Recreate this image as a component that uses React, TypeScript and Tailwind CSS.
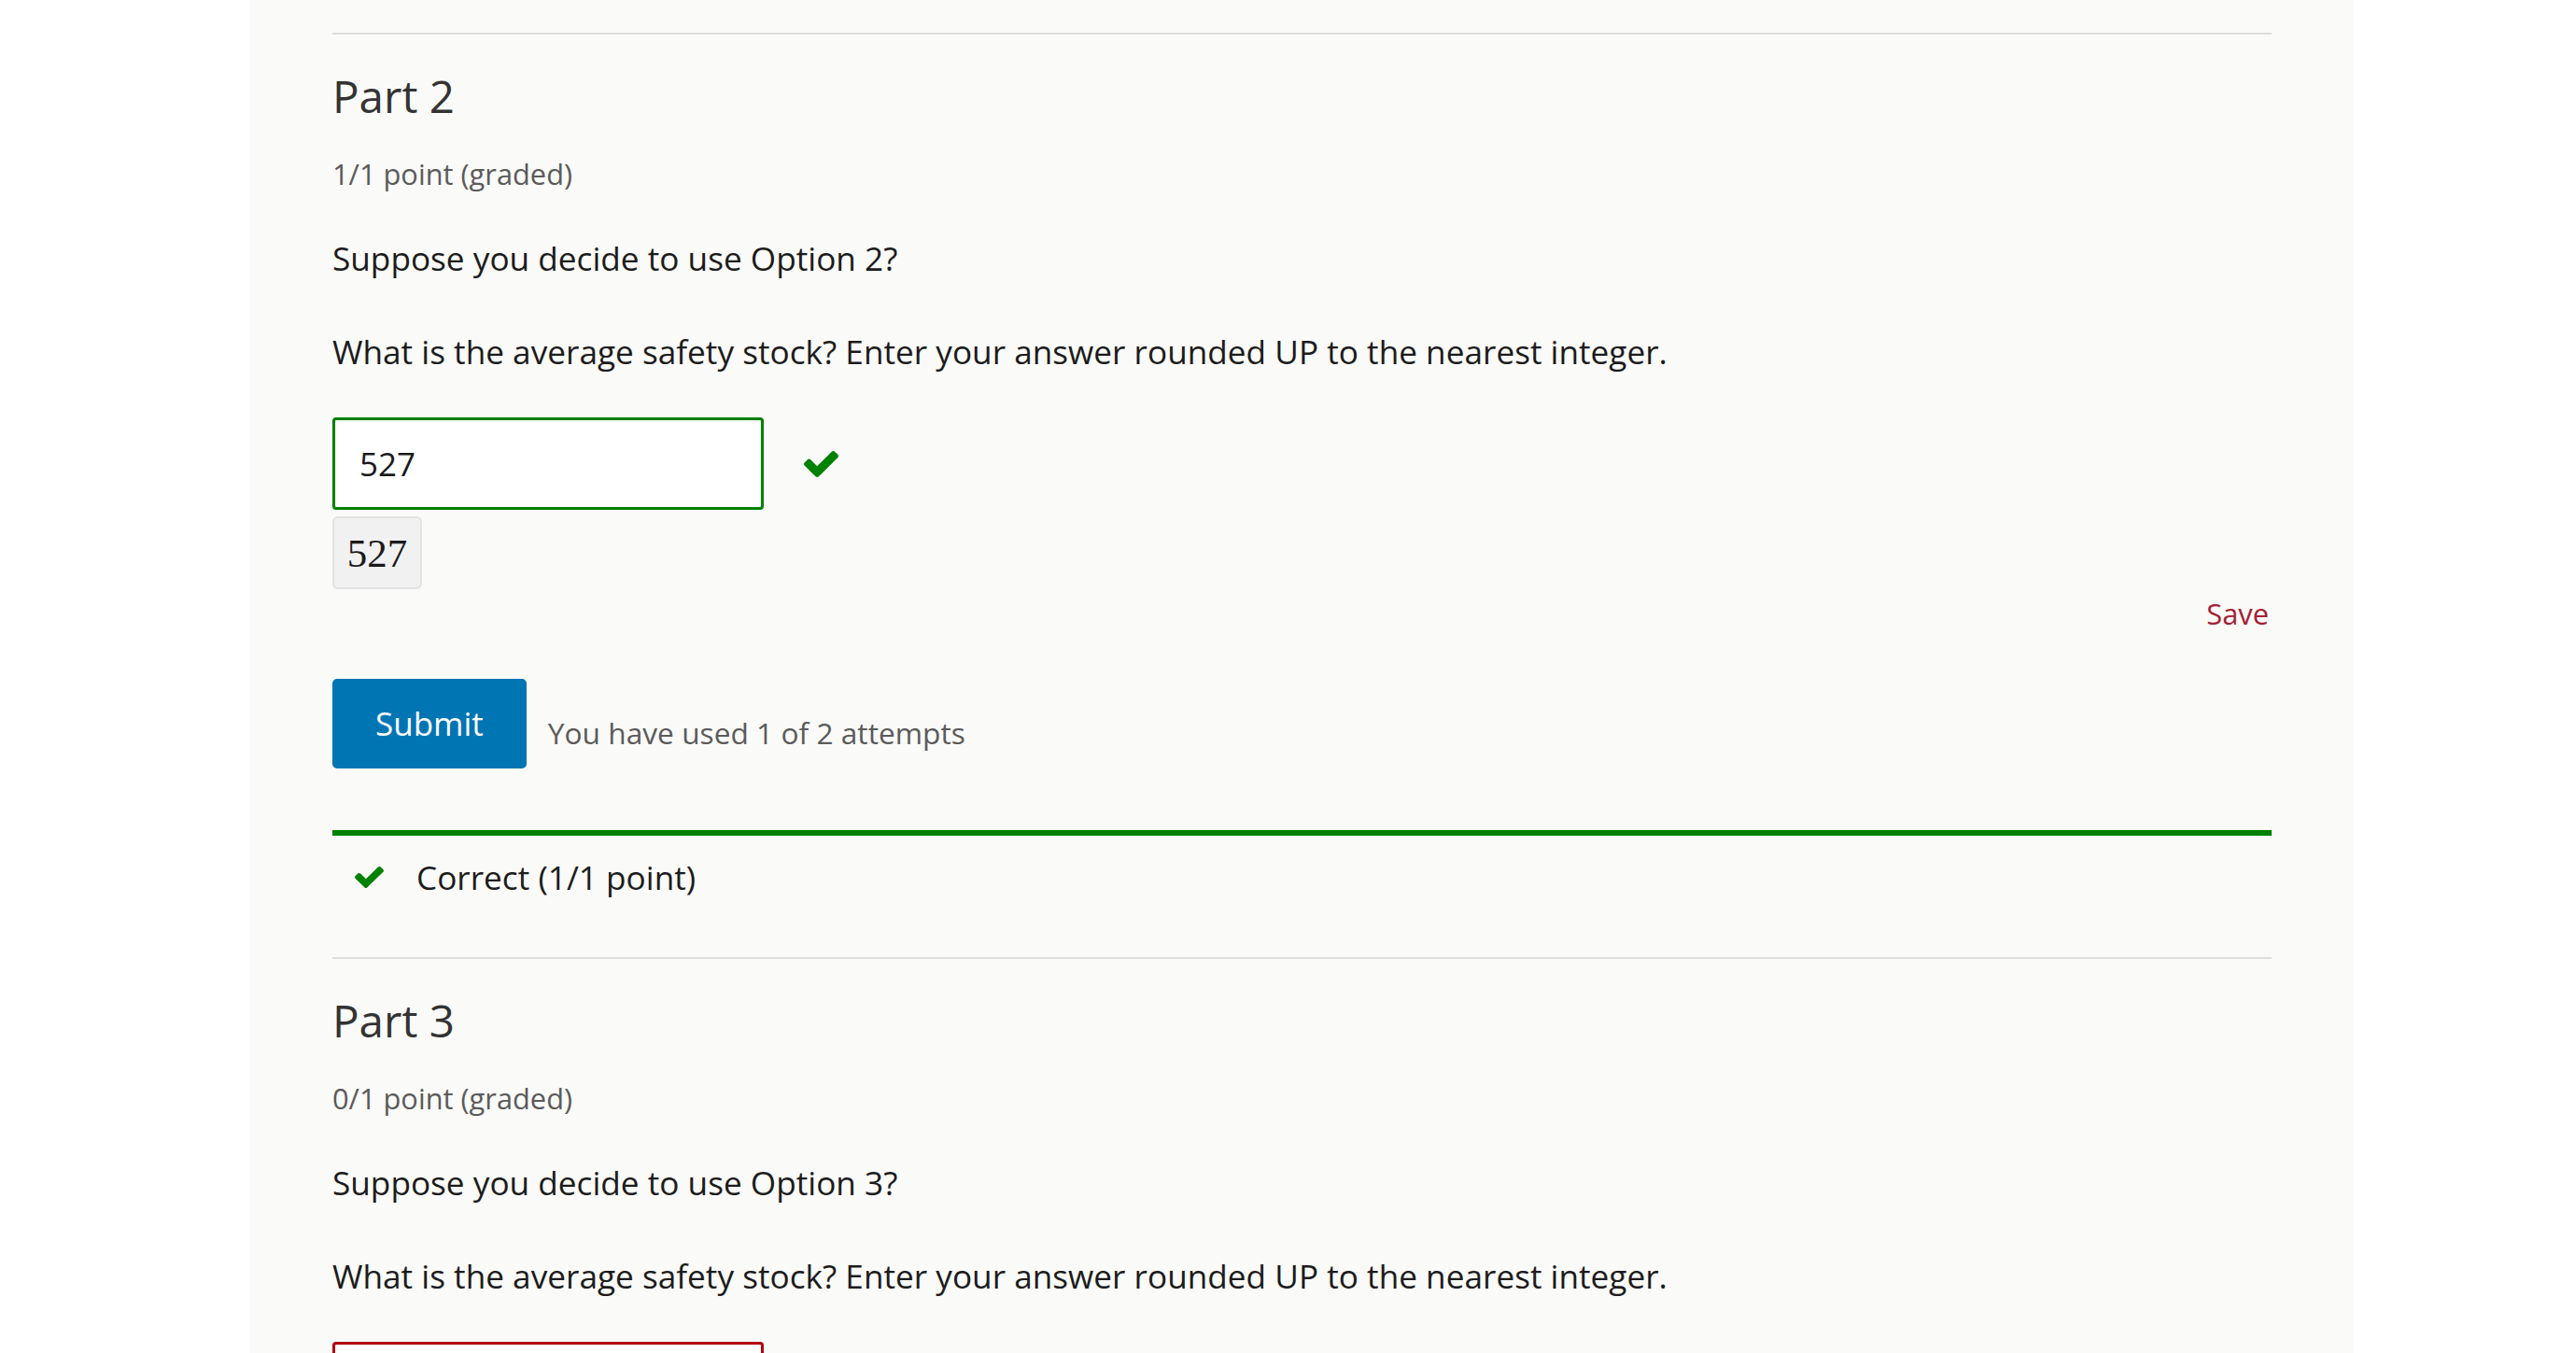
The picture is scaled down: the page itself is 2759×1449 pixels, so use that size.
import React from "react";

// Font Awesome style check glyph
function CheckIcon({ className }: { className?: string }) {
  return (
    <svg
      viewBox="121 334 1550 1188"
      preserveAspectRatio="none"
      className={className}
      fill="currentColor"
      aria-hidden="true"
    >
      <path d="M1671 566q0 40-28 68l-724 724-136 136q-28 28-68 28t-68-28l-136-136-362-362q-28-28-28-68t28-68l136-136q28-28 68-28t68 28l294 295 656-657q28-28 68-28t68 28l136 136q28 28 28 68z" />
    </svg>
  );
}

type PartProps = {
  title: string;
  score: string;
  option: string;
  value: string;
  correct: boolean;
  answered: boolean;
};

function ProblemPart({ title, score, option, value, correct, answered }: PartProps) {
  return (
    <section className="border-t-2 border-[#dddddd]">
      <h3 className="mt-[38px] text-[47.5px] leading-[56px] font-normal text-[#333333]">{title}</h3>
      <div className="mt-[33px] text-[30.8px] leading-[44px] text-[#5b5b5b]">{score}</div>
      <p className="mt-[43px] text-[35.2px] leading-[50px] text-[#1c1c1c]">
        Suppose you decide to use {option}?
      </p>
      <p className="mt-[50px] text-[35.2px] leading-[50px] text-[#1c1c1c]">
        What is the average safety stock? Enter your answer rounded UP to the nearest integer.
      </p>

      <div className="mt-[46px] flex items-center">
        <input
          readOnly
          value={value}
          className={
            correct
              ? "h-[99px] w-[462px] rounded-[4px] border-[3px] border-[#008100] bg-white pl-[26px] text-[35px] text-[#1a1a1a] shadow-[inset_0_1px_3px_rgba(0,0,0,0.08)] outline-none"
              : "h-[99px] w-[462px] rounded-[4px] border-[3px] border-[#b20610] bg-white pl-[26px] text-[35px] text-[#1a1a1a] shadow-[inset_0_1px_3px_rgba(0,0,0,0.08)] outline-none"
          }
        />
        {correct && <CheckIcon className="ml-[43px] h-[28px] w-[37px] text-[#008100]" />}
      </div>

      {answered && (
        <>
          <div className="mt-[7px] flex h-[78px] w-[96px] items-center justify-center rounded-[6px] border-2 border-[#e2e2e2] bg-[#f1f1f1]">
            <span className="font-['Liberation_Serif',serif] text-[43px] leading-none text-[#1a1a1a]">{value}</span>
          </div>

          <div className="mt-[4px] flex justify-end">
            <button className="pr-[3px] text-[30.8px] leading-[44px] text-[#a31f34]">Save</button>
          </div>

          <div className="mt-[48px] flex items-start">
            <button className="h-[96px] rounded-[5px] bg-[#0075b4] px-[46px] text-[35px] leading-[50px] text-white">
              Submit
            </button>
            <span className="ml-[23px] mt-[36px] text-[31.7px] leading-[44px] text-[#5b5b5b]">
              You have used 1 of 2 attempts
            </span>
          </div>

          <div className="mt-[66px] flex items-center border-t-[6px] border-[#008100] pt-[19px]">
            <CheckIcon className="ml-[24px] h-[23px] w-[31px] text-[#008100]" />
            <span className="ml-[35px] text-[35.2px] leading-[50px] text-[#1c1c1c]">Correct (1/1 point)</span>
          </div>
        </>
      )}
    </section>
  );
}

export default function App() {
  return (
    <div className="h-screen overflow-hidden bg-white font-['Open_Sans',sans-serif]">
      <div className="ml-[268px] min-h-full w-[2253px] bg-[#fafaf8] px-[88px] pt-[35px]">
        <ProblemPart title="Part 2" score="1/1 point (graded)" option="Option 2" value="527" correct answered />
        <div className="mt-[61px]">
          <ProblemPart title="Part 3" score="0/1 point (graded)" option="Option 3" value="" correct={false} answered={false} />
        </div>
      </div>
    </div>
  );
}
